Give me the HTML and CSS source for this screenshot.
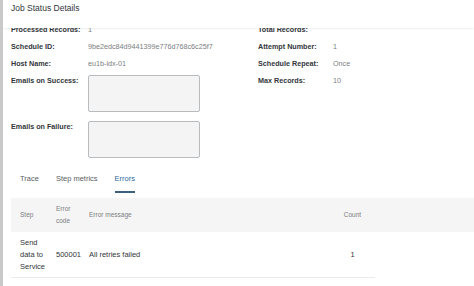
FILE: index.html
```html
<!DOCTYPE html>
<html>
<head>
    <meta charset="utf-8">
    <title>Job Status Details</title>
    <link rel="stylesheet" href="styles.css">
</head>
<body>
    <div class="backdrop"></div>
    <div class="dialog">
        <div class="dialog-header">
            <h1>Job Status Details</h1>
        </div>

        <div class="dialog-body">
            <div class="details">
                <div class="detail-col left">
                    <div class="field">
                        <span class="label">Processed Records:</span>
                        <span class="value">1</span>
                    </div>
                    <div class="field">
                        <span class="label">Schedule ID:</span>
                        <span class="value">9be2edc84d9441399e776d768c6c25f7</span>
                    </div>
                    <div class="field">
                        <span class="label">Host Name:</span>
                        <span class="value">eu1b-idx-01</span>
                    </div>
                    <div class="field tall">
                        <span class="label">Emails on Success:</span>
                        <textarea class="mail-box" readonly></textarea>
                    </div>
                    <div class="field tall">
                        <span class="label">Emails on Failure:</span>
                        <textarea class="mail-box" readonly></textarea>
                    </div>
                </div>

                <div class="detail-col right">
                    <div class="field">
                        <span class="label">Total Records:</span>
                        <span class="value"></span>
                    </div>
                    <div class="field">
                        <span class="label">Attempt Number:</span>
                        <span class="value">1</span>
                    </div>
                    <div class="field">
                        <span class="label">Schedule Repeat:</span>
                        <span class="value">Once</span>
                    </div>
                    <div class="field">
                        <span class="label">Max Records:</span>
                        <span class="value">10</span>
                    </div>
                </div>
            </div>

            <div class="tabs">
                <button class="tab">Trace</button>
                <button class="tab">Step metrics</button>
                <button class="tab active">Errors</button>
            </div>

            <div class="error-table">
                <div class="row head">
                    <div class="cell">Step</div>
                    <div class="cell">Error code</div>
                    <div class="cell">Error message</div>
                    <div class="cell count">Count</div>
                    <div class="cell filler"></div>
                </div>
                <div class="row">
                    <div class="cell">Send data to Service</div>
                    <div class="cell">500001</div>
                    <div class="cell">All retries failed</div>
                    <div class="cell count">1</div>
                    <div class="cell filler"></div>
                </div>
            </div>
        </div>
    </div>
</body>
</html>
```

FILE: styles.css
```css
* {
    margin: 0;
    padding: 0;
    box-sizing: border-box;
    font-family: "Liberation Sans", Arial, sans-serif;
}

body {
    display: flex;
    height: 286px;
    overflow: hidden;
    background-color: #ffffff;
}

.backdrop {
    width: 3px;
    flex-shrink: 0;
    background-color: #c9c9c9;
}

.dialog {
    flex: 1;
    display: flex;
    flex-direction: column;
    background-color: #ffffff;
    overflow: hidden;
}

.dialog-header {
    height: 28px;
    flex-shrink: 0;
    padding: 2px 0 0 8px;
    background-color: #ffffff;
    box-shadow: 0 1px 2px rgba(0, 0, 0, 0.07);
    position: relative;
    z-index: 1;
}

.dialog-header h1 {
    font-size: 8.5px;
    line-height: 12px;
    font-weight: 400;
    color: #32363a;
}

.dialog-body {
    flex: 1;
    overflow: hidden;
}

.details {
    display: flex;
    margin-top: -4px;
    padding-left: 8px;
}

.detail-col.left {
    width: 247px;
}

.field {
    display: flex;
    align-items: flex-start;
    height: 17px;
    font-size: 7.2px;
    line-height: 12px;
}

.field.tall {
    height: auto;
    margin-bottom: 9px;
}

.label {
    font-weight: 700;
    color: #32363a;
    flex-shrink: 0;
}

.left .label {
    width: 77px;
}

.right .label {
    width: 75px;
}

.value {
    color: #7b7e82;
}

.mail-box {
    width: 112px;
    height: 37px;
    border: 1px solid #b9bcbf;
    border-radius: 2px;
    background-color: #f4f4f4;
    resize: none;
    outline: none;
}

.tabs {
    display: flex;
    gap: 17px;
    padding: 3px 0 0 17px;
}

.tab {
    background: none;
    border: none;
    font-size: 7.5px;
    color: #5b5e62;
    padding: 4px 0 8px;
    border-bottom: 2px solid transparent;
    font-family: "Liberation Sans", Arial, sans-serif;
}

.tab.active {
    color: #2b6a9e;
    border-bottom-color: #3e607f;
}

.error-table {
    margin: 5px 0 0 8px;
}

.row {
    display: grid;
    grid-template-columns: 36px 33px 250px 45px 1fr;
    align-items: center;
    font-size: 7.5px;
    line-height: 12px;
    color: #32363a;
}

.row.head {
    height: 34px;
    background-color: #f5f5f5;
    font-size: 6.5px;
    line-height: 12px;
    color: #7b7e82;
}

.row:not(.head) {
    height: 46px;
}

.row:not(.head) .cell:not(.filler) {
    height: 100%;
    display: flex;
    align-items: center;
    border-bottom: 1px solid #ececec;
}

.cell {
    padding-left: 9px;
}

.cell.count {
    padding-left: 0;
    text-align: center;
    justify-content: center;
}
```
